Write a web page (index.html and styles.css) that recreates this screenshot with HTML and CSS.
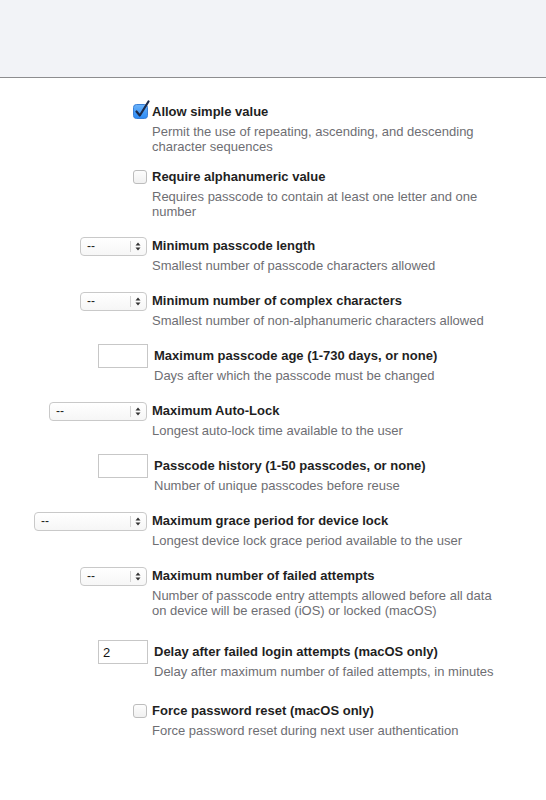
FILE: index.html
```html
<!DOCTYPE html>
<html lang="en">

<head>
    <meta charset="UTF-8">
    <meta name="viewport" content="width=device-width, initial-scale=1.0">
    <title>Passcode</title>
    <link rel="stylesheet" href="styles.css">
</head>

<body>
    <div class="toolbar"></div>

    <div class="settings">
        <div class="row row-tight">
            <div class="control">
                <span class="check checked">
                    <svg width="18" height="20" viewBox="0 0 18 20">
                        <defs>
                            <linearGradient id="blue" x1="0" y1="0" x2="0" y2="1">
                                <stop offset="0" stop-color="#6cb3fa"/>
                                <stop offset="1" stop-color="#2a8af6"/>
                            </linearGradient>
                        </defs>
                        <rect x="0.5" y="4.5" width="14" height="14" rx="3" fill="url(#blue)" stroke="#3a7fd6"/>
                        <path d="M3.5 11.5 L6.8 15.5 L15.5 1.5" fill="none" stroke="#1c2a4a" stroke-width="2.2" stroke-linecap="round" stroke-linejoin="round"/>
                    </svg>
                </span>
            </div>
            <div class="text">
                <div class="title">Allow simple value</div>
                <div class="desc">Permit the use of repeating, ascending, and descending character sequences</div>
            </div>
        </div>

        <div class="row row-check">
            <div class="control"><span class="check"></span></div>
            <div class="text">
                <div class="title">Require alphanumeric value</div>
                <div class="desc">Requires passcode to contain at least one letter and one number</div>
            </div>
        </div>

        <div class="row">
            <div class="control">
                <div class="select w-small"><span class="value">--</span><span class="sep"></span>
                    <svg class="arrows" width="6" height="9" viewBox="0 0 6 9"><path d="M3 0.5 L5.5 3.5 H0.5 Z M3 8.5 L5.5 5.5 H0.5 Z" fill="#333"/></svg>
                </div>
            </div>
            <div class="text">
                <div class="title">Minimum passcode length</div>
                <div class="desc">Smallest number of passcode characters allowed</div>
            </div>
        </div>

        <div class="row">
            <div class="control">
                <div class="select w-small"><span class="value">--</span><span class="sep"></span>
                    <svg class="arrows" width="6" height="9" viewBox="0 0 6 9"><path d="M3 0.5 L5.5 3.5 H0.5 Z M3 8.5 L5.5 5.5 H0.5 Z" fill="#333"/></svg>
                </div>
            </div>
            <div class="text">
                <div class="title">Minimum number of complex characters</div>
                <div class="desc">Smallest number of non-alphanumeric characters allowed</div>
            </div>
        </div>

        <div class="row row-input">
            <div class="control"><input class="field" type="text"></div>
            <div class="text">
                <div class="title">Maximum passcode age (1-730 days, or none)</div>
                <div class="desc">Days after which the passcode must be changed</div>
            </div>
        </div>

        <div class="row">
            <div class="control">
                <div class="select w-medium"><span class="value">--</span><span class="sep"></span>
                    <svg class="arrows" width="6" height="9" viewBox="0 0 6 9"><path d="M3 0.5 L5.5 3.5 H0.5 Z M3 8.5 L5.5 5.5 H0.5 Z" fill="#333"/></svg>
                </div>
            </div>
            <div class="text">
                <div class="title">Maximum Auto-Lock</div>
                <div class="desc">Longest auto-lock time available to the user</div>
            </div>
        </div>

        <div class="row row-input">
            <div class="control"><input class="field" type="text"></div>
            <div class="text">
                <div class="title">Passcode history (1-50 passcodes, or none)</div>
                <div class="desc">Number of unique passcodes before reuse</div>
            </div>
        </div>

        <div class="row">
            <div class="control">
                <div class="select w-large"><span class="value">--</span><span class="sep"></span>
                    <svg class="arrows" width="6" height="9" viewBox="0 0 6 9"><path d="M3 0.5 L5.5 3.5 H0.5 Z M3 8.5 L5.5 5.5 H0.5 Z" fill="#333"/></svg>
                </div>
            </div>
            <div class="text">
                <div class="title">Maximum grace period for device lock</div>
                <div class="desc">Longest device lock grace period available to the user</div>
            </div>
        </div>

        <div class="row row-loose">
            <div class="control">
                <div class="select w-small"><span class="value">--</span><span class="sep"></span>
                    <svg class="arrows" width="6" height="9" viewBox="0 0 6 9"><path d="M3 0.5 L5.5 3.5 H0.5 Z M3 8.5 L5.5 5.5 H0.5 Z" fill="#333"/></svg>
                </div>
            </div>
            <div class="text">
                <div class="title">Maximum number of failed attempts</div>
                <div class="desc">Number of passcode entry attempts allowed before all data on device will be erased (iOS) or locked (macOS)</div>
            </div>
        </div>

        <div class="row row-input row-last-gap">
            <div class="control"><input class="field" type="text" value="2"></div>
            <div class="text">
                <div class="title">Delay after failed login attempts (macOS only)</div>
                <div class="desc">Delay after maximum number of failed attempts, in minutes</div>
            </div>
        </div>

        <div class="row">
            <div class="control"><span class="check"></span></div>
            <div class="text">
                <div class="title">Force password reset (macOS only)</div>
                <div class="desc">Force password reset during next user authentication</div>
            </div>
        </div>
    </div>
</body>

</html>
```

FILE: styles.css
```css
body {
    margin: 0;
    font-family: "Liberation Sans", Arial, sans-serif;
    font-size: 13px;
    background-color: #fff;
}

.toolbar {
    height: 77px;
    background-color: #f2f3f7;
    border-bottom: 1px solid #8d8d8f;
}

.settings {
    padding-top: 26px;
}

.row {
    display: grid;
    grid-template-columns: 147px 350px;
    column-gap: 5px;
    margin-bottom: 20px;
}

.row-tight {
    margin-bottom: 15px;
}

.row-check {
    margin-bottom: 19px;
}

.row-loose {
    margin-bottom: 26px;
}

.row-last-gap {
    margin-bottom: 24px;
}

.control {
    height: 16px;
    display: flex;
    justify-content: flex-end;
    align-items: center;
}

.title {
    font-weight: bold;
    color: #1f1f1f;
    line-height: 16px;
}

.desc {
    color: #6e6e73;
    line-height: 15px;
    margin-top: 4px;
}

.row-input .text {
    padding-left: 2px;
}

.row-input .control {
    margin-right: -1px;
}

/* checkboxes */
.check {
    width: 14px;
    height: 14px;
    box-sizing: border-box;
    border: 1px solid #bdbdbd;
    border-radius: 3px;
    background: linear-gradient(#fdfdfd, #f0f0f0);
    position: relative;
}

.check.checked {
    border: none;
    background: none;
}

.check.checked svg {
    position: absolute;
    left: 0;
    top: -5px;
}

/* popup menus */
.select {
    height: 19px;
    box-sizing: border-box;
    border: 1px solid #c9c9c9;
    border-radius: 4px;
    background: linear-gradient(#ffffff, #f6f6f6);
    display: flex;
    align-items: center;
    color: #222;
    font-size: 12px;
}

.select .value {
    flex: 1;
    padding-left: 6px;
}

.select .sep {
    width: 1px;
    height: 11px;
    background-color: #d4d4d4;
    margin-right: 4px;
}

.select .arrows {
    margin-right: 5px;
}

.w-small {
    width: 67px;
}

.w-medium {
    width: 98px;
}

.w-large {
    width: 113px;
}

/* text fields */
.field {
    width: 50px;
    height: 24px;
    box-sizing: border-box;
    border: 1px solid #c7c7c7;
    border-radius: 0;
    padding: 0 4px;
    font-family: inherit;
    font-size: 13px;
    color: #111;
    flex-shrink: 0;
}
```
